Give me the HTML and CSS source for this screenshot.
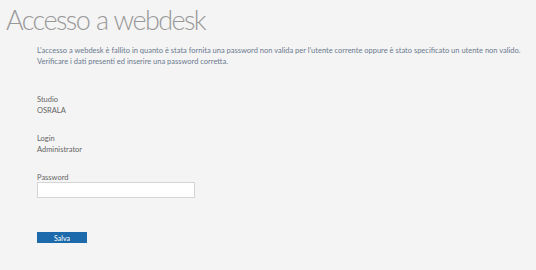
FILE: index.html
```html
<!DOCTYPE html>
<html lang="it">
<head>
    <meta charset="UTF-8">
    <title>Accesso a webdesk</title>
    <link rel="stylesheet" href="styles.css">
</head>
<body>
    <h1 class="title">Accesso a webdesk</h1>
    <div class="content">
        <p class="msg">L'accesso a webdesk è fallito in quanto è stata fornita una password non valida per l'utente corrente oppure è stato specificato un utente non valido.<br>Verificare i dati presenti ed inserire una password corretta.</p>
        <div class="field">
            <div class="label">Studio</div>
            <div class="value">OSRALA</div>
        </div>
        <div class="field">
            <div class="label">Login</div>
            <div class="value">Administrator</div>
        </div>
        <div class="field">
            <div class="label">Password</div>
            <input type="password" class="pwd">
        </div>
        <button class="btn">Salva</button>
    </div>
</body>
</html>
```

FILE: styles.css
```css
*{
    margin: 0;
    padding: 0;
    box-sizing: border-box;
    font-family: Lato, "Open Sans", sans-serif;
}
body{
    background: #f4f4f4;
    width: 536px;
    height: 270px;
    overflow: hidden;
}
.title{
    font-size: 27px;
    font-weight: 300;
    color: #999;
    padding: 2px 0 0 6px;
    line-height: 36px;
    letter-spacing: -1.6px;
    word-spacing: 1px;
}
.content{
    padding-left: 37px;
}
.msg{
    font-size: 7.5px;
    line-height: 11px;
    color: #6b7a8f;
    margin-top: 7px;
    white-space: nowrap;
}
.field{
    margin-top: 27px;
}
.field + .field{
    margin-top: 17px;
}
.label, .value{
    font-size: 7.5px;
    line-height: 11px;
    color: #666;
}
.pwd{
    display: block;
    width: 158px;
    height: 16px;
    margin-top: -1px;
    background: #fff;
    border: 1px solid #d4d4d4;
    outline: none;
}
.btn{
    margin-top: 34px;
    width: 50px;
    height: 11px;
    background: #1c6aab;
    color: #fff;
    border: none;
    font-size: 7px;
}
```
